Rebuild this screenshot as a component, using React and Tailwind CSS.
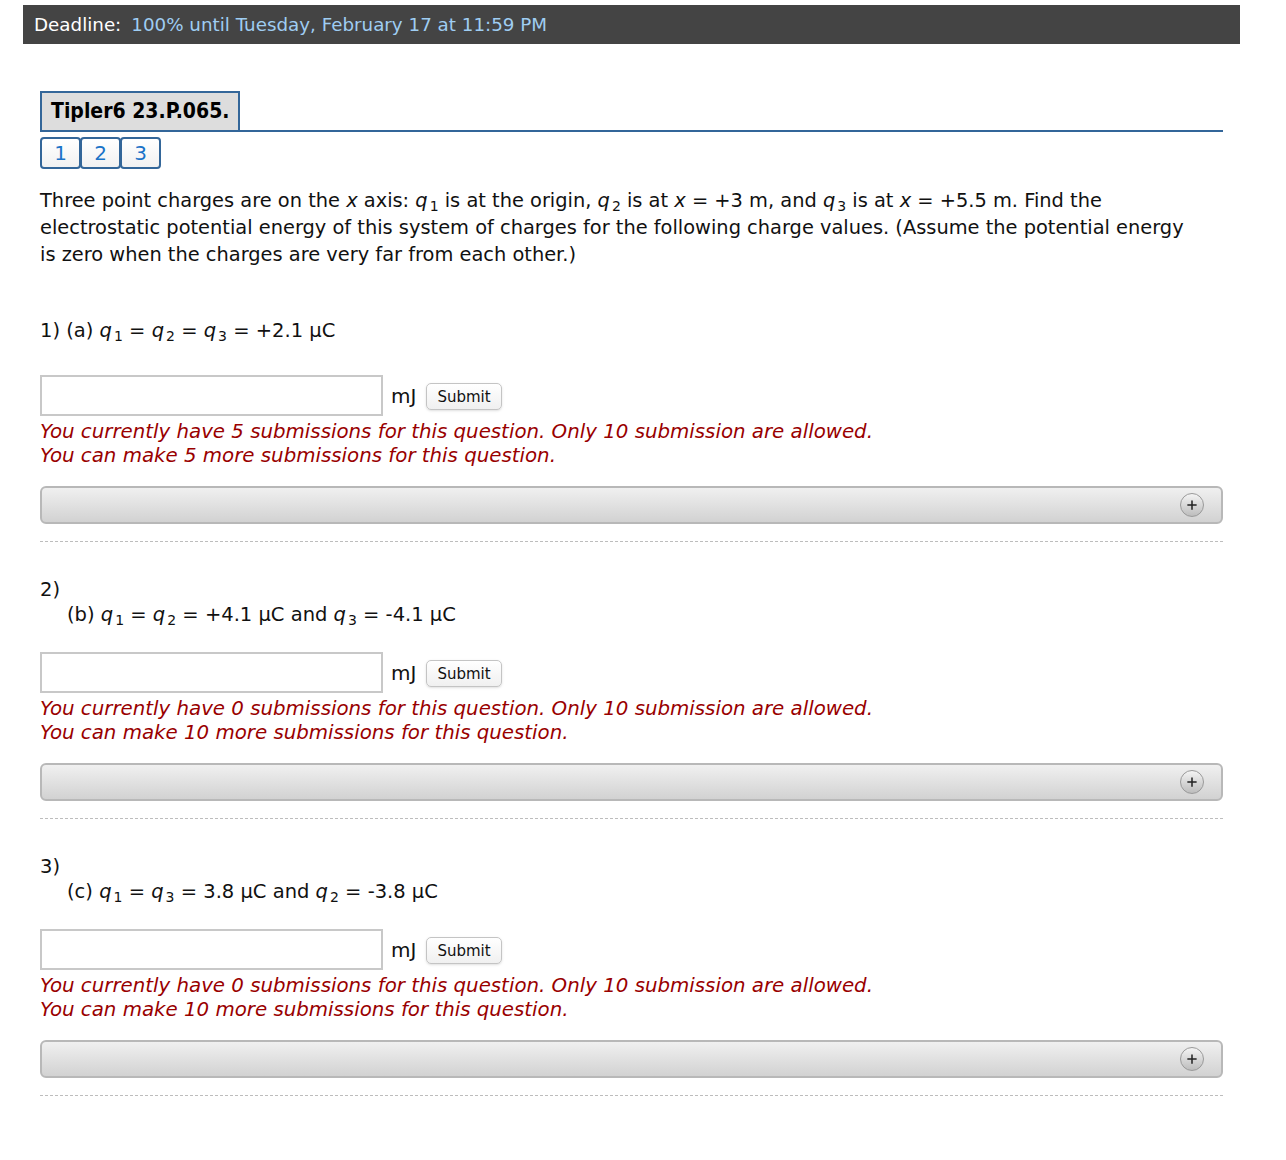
import { FaPlus } from "react-icons/fa6";

const Q = ({ n }) => (
    <i>
        q<span className="ml-[2px] text-[14px] not-italic leading-[0] align-[-4px]">{n}</span>
    </i>
);

function Answer({ used, left }) {
    return (
        <div>
            <div className="flex items-center">
                <input className="w-[343px] h-[41px] border-2 border-[#c8c8c8] bg-white" />
                <span className="ml-2 text-[20px]">mJ</span>
                <button className="ml-[10px] h-[27px] px-[10px] text-[15px] rounded-[5px] border border-[#c4c4c4] bg-gradient-to-b from-white to-[#f0f0f0] shadow-sm mt-[2px]">
                    Submit
                </button>
            </div>
            <div className="text-[#990000] italic text-[19.8px] leading-[24px] mt-[4px]">
                <div>You currently have {used} submissions for this question. Only 10 submission are allowed.</div>
                <div>You can make {left} more submissions for this question.</div>
            </div>
            <div className="mt-[18px] h-[38px] rounded-[6px] border-2 border-[#b8b8b8] bg-gradient-to-b from-[#f0f0f0] to-[#d2d2d2] flex items-center justify-end pr-[17px]">
                <div className="w-[24px] h-[24px] rounded-full border border-[#9a9a9a] bg-gradient-to-b from-[#f4f4f4] to-[#bdbdbd] flex items-center justify-center text-[#222]">
                    <FaPlus className="w-[12px] h-[12px]" />
                </div>
            </div>
            <div className="mt-[17px] border-t border-dashed border-[#bdbdbd]" />
        </div>
    );
}

export default function App() {
    return (
        <div className="bg-white min-h-[1160px] pt-[5px] text-[#111]" style={{ fontFamily: "'DejaVu Sans', sans-serif" }}>
            <div className="mx-[23px] w-[1217px] h-[39px] bg-[#444444] flex items-center px-[11px] text-[18.3px]">
                <span className="text-white">Deadline:</span>
                <span className="ml-[10px] text-[#9fcdf2]">100% until Tuesday, February 17 at 11:59 PM</span>
            </div>

            <div className="ml-[40px] w-[1183px]">
                <div className="mt-[47px] border-b-2 border-[#336699]">
                    <div
                        className="inline-block bg-[#dddddd] border-2 border-b-0 border-[#336699] px-[9px] h-[39px] leading-[37px] text-[21px] font-bold text-black"
                        style={{ fontFamily: "'DejaVu Sans Condensed', 'DejaVu Sans', sans-serif" }}
                    >
                        Tipler6 23.P.065.
                    </div>
                </div>
                <div className="flex mt-[5px]">
                    {[1, 2, 3].map((n) => (
                        <div key={n} className="w-[41px] h-[32px] border-2 border-[#336699] rounded-[4px] -mr-[1px] bg-gradient-to-b from-white to-[#f1f1f1] text-[#1a73c8] text-[20px] flex items-center justify-center">
                            {n}
                        </div>
                    ))}
                </div>

                <p className="mt-[18px] text-[19.4px] leading-[27px] pr-[25px]">
                    Three point charges are on the <i>x</i> axis: <Q n="1" /> is at the origin, <Q n="2" /> is at <i>x</i> = +3 m, and <Q n="3" /> is at <i>x</i> = +5.5 m. Find the electrostatic potential energy of this system of charges for the following charge values. (Assume the potential energy is zero when the charges are very far from each other.)
                </p>

                <div className="mt-[48px] text-[19.5px]">
                    1) (a) <Q n="1" /> = <Q n="2" /> = <Q n="3" /> = +2.1 μC
                </div>
                <div className="mt-[30px]">
                    <Answer used="5" left="5" />
                </div>

                <div className="mt-[35px] text-[19.5px] leading-[25px]">
                    <div>2)</div>
                    <div className="ml-[27px]">(b) <Q n="1" /> = <Q n="2" /> = +4.1 μC and <Q n="3" /> = -4.1 μC</div>
                </div>
                <div className="mt-[25px]">
                    <Answer used="0" left="10" />
                </div>

                <div className="mt-[35px] text-[19.5px] leading-[25px]">
                    <div>3)</div>
                    <div className="ml-[27px]">(c) <Q n="1" /> = <Q n="3" /> = 3.8 μC and <Q n="2" /> = -3.8 μC</div>
                </div>
                <div className="mt-[25px]">
                    <Answer used="0" left="10" />
                </div>
            </div>
        </div>
    );
}
